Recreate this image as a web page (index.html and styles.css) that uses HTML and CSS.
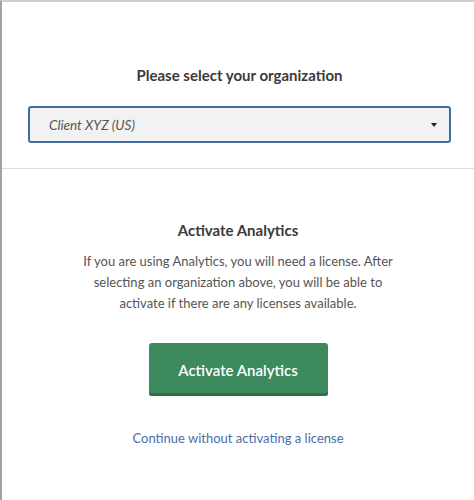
FILE: index.html
```html
<!DOCTYPE html>
<html>
<head>
<meta charset="utf-8">
<link rel="stylesheet" href="styles.css">
</head>
<body>
<div class="panel">
  <section class="org">
    <h2 class="title">Please select your organization</h2>
    <div class="select">
      <span class="select-value">Client XYZ (US)</span>
      <span class="caret"></span>
    </div>
  </section>
  <section class="activate">
    <h2 class="title">Activate Analytics</h2>
    <p class="desc">If you are using Analytics, you will need a license. After selecting an organization above, you will be able to activate if there are any licenses available.</p>
    <button class="btn">Activate Analytics</button>
    <a class="link" href="#">Continue without activating a license</a>
  </section>
</div>
</body>
</html>
```
FILE: styles.css
```css
html, body {
  margin: 0;
  padding: 0;
  background: #ffffff;
}
body {
  font-family: Lato, "Open Sans", sans-serif;
  color: #333333;
}
.panel {
  box-sizing: border-box;
  height: 500px;
  border-left: 2px solid #a3a3a3;
  border-top: 2px solid #cfcfcf;
  background: #ffffff;
}
.org {
  padding: 63px 23px 25px 26px;
  border-bottom: 1px solid #dcdcdc;
}
.title {
  margin: 0;
  font-size: 15px;
  line-height: 20px;
  font-weight: 700;
  color: #3a3a3a;
  text-align: center;
}
.org .title {
  margin-bottom: 21px;
}
.select {
  box-sizing: border-box;
  height: 37px;
  display: flex;
  align-items: center;
  justify-content: space-between;
  padding: 0 12px 0 19px;
  background: #f2f2f2;
  border: 2px solid #3f6ea3;
  border-radius: 3px;
}
.select-value {
  font-style: italic;
  font-size: 13.5px;
  color: #555555;
}
.caret {
  width: 0;
  height: 0;
  border-left: 3px solid transparent;
  border-right: 3px solid transparent;
  border-top: 4px solid #222222;
}
.activate {
  display: flex;
  flex-direction: column;
  align-items: center;
  padding-top: 51px;
}
.activate .title {
  margin-bottom: 11px;
}
.desc {
  margin: 0;
  max-width: 322px;
  font-size: 13px;
  line-height: 21px;
  color: #555555;
  text-align: center;
}
.btn {
  margin-top: 29px;
  width: 179px;
  height: 53px;
  border: none;
  border-radius: 3px;
  background: #3c8a5e;
  box-shadow: inset 0 -3px 0 #2f6e4a;
  color: #ffffff;
  font-family: Lato, sans-serif;
  font-size: 15px;
  font-weight: 600;
}
.link {
  margin-top: 32px;
  font-size: 13px;
  line-height: 20px;
  color: #4a6ea6;
  text-decoration: none;
}
```
